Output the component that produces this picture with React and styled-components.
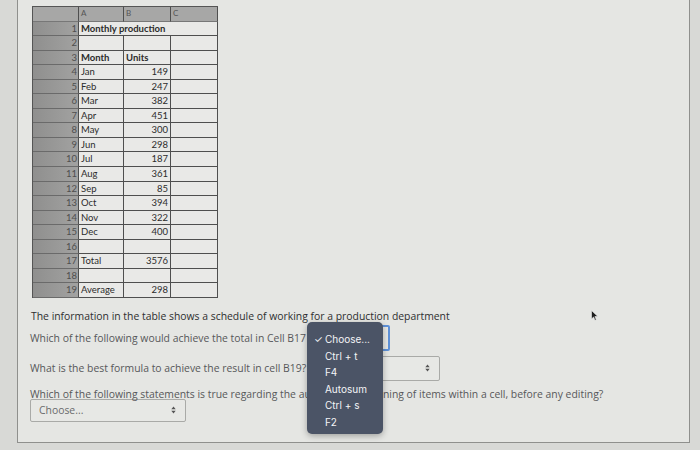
import React from 'react';
import styled, { createGlobalStyle } from 'styled-components';

const GlobalStyle = createGlobalStyle`
  body {
    margin: 0;
    background: #d8d9d6;
    font-family: "Open Sans", "Liberation Sans", sans-serif;
  }
`;

const Panel = styled.div`
  position: relative;
  margin-left: 17px;
  width: 673px;
  height: 443px;
  box-sizing: border-box;
  padding: 6px 0 0 14px;
  background: #e5e6e3;
  border-left: 1px solid #8f908d;
  border-right: 1px solid #8f908d;
  border-bottom: 1px solid #8f908d;
`;

// spreadsheet picture
const Sheet = styled.div`
  display: grid;
  grid-template-columns: 46px 45px 47px 47px;
  grid-auto-rows: 14.55px;
  width: 185px;
  border-top: 1px solid #555;
  border-left: 1px solid #555;
  background: #e9e9e7;
  font-family: Lato, "Open Sans", sans-serif;
  font-size: 9.5px;
  color: #2c2c2c;
`;

const Cell = styled.div`
  box-sizing: border-box;
  border-right: 1px solid #4f4f4f;
  border-bottom: 1px solid #4f4f4f;
  padding: 0 2px;
  line-height: 13px;
  white-space: nowrap;
  overflow: visible;
  text-align: ${p => (p.$num ? 'right' : 'left')};
  font-weight: ${p => (p.$bold ? 700 : 400)};
  grid-column: ${p => (p.$span ? `span ${p.$span}` : 'auto')};
`;

const ColHead = styled(Cell)`
  background: #a7a7a6;
  color: #555;
  font-size: 8px;
  border-bottom-color: #777;
`;

const RowHead = styled(Cell)`
  background: linear-gradient(90deg, #8f8f8e, #a2a2a1);
  color: #4e4e4e;
  text-align: right;
  padding-right: 1px;
  border-bottom-color: #6a6a6a;
`;

const Intro = styled.p`
  margin: 11px 0 0 -1px;
  font-size: 10.4px;
  line-height: 14px;
  color: #2e2f30;
`;

const Question = styled.div`
  display: flex;
  align-items: center;
  gap: 4px;
  margin: ${p => p.$mt} 0 0 -2px;
  font-size: 10.4px;
  color: #57585a;
`;

const QuestionBlock = styled.div`
  margin: 7px 0 0 -2px;
  font-size: 10.4px;
  line-height: 12px;
  color: #57585a;
`;

const SelectWrap = styled.div`
  position: relative;
`;

const Select = styled.div`
  box-sizing: border-box;
  display: flex;
  align-items: center;
  justify-content: space-between;
  width: ${p => p.$w}px;
  height: ${p => p.$h}px;
  margin-top: ${p => p.$mt || 0}px;
  padding: 0 9px 0 8px;
  background: #e7e8e5;
  border: ${p => (p.$focus ? '2px solid #5f92d9' : '1px solid #a9aaa7')};
  border-radius: 2px;
  color: #6a6b6c;
  font-size: 10.4px;
`;

const Popup = styled.ul`
  position: absolute;
  left: -3px;
  top: -3px;
  width: 76px;
  box-sizing: border-box;
  margin: 0;
  padding: 9px 0 3px;
  list-style: none;
  background: #4b5466;
  border-radius: 5px;
  box-shadow: 0 2px 6px rgba(0, 0, 0, 0.3);
  font-family: Inter, "Liberation Sans", sans-serif;
  font-size: 10px;
  color: #f4f5f7;
  z-index: 2;
`;

const Option = styled.li`
  position: relative;
  height: 16.6px;
  line-height: 16.6px;
  padding-left: 18px;
`;

const Check = styled.span`
  position: absolute;
  left: 7px;
  font-size: 10px;
`;

const Cursor = styled.svg`
  position: absolute;
  left: 573px;
  top: 310px;
`;

const Arrows = () => (
  <svg width="5" height="8" viewBox="0 0 5 8">
    <path d="M2.5 0.5 L4.7 3.3 H0.3 Z M2.5 7.5 L4.7 4.7 H0.3 Z" fill="#555" />
  </svg>
);

const rows = [
  ['Monthly production', null, true],
  ['', ''],
  ['Month', 'Units', true],
  ['Jan', '149'],
  ['Feb', '247'],
  ['Mar', '382'],
  ['Apr', '451'],
  ['May', '300'],
  ['Jun', '298'],
  ['Jul', '187'],
  ['Aug', '361'],
  ['Sep', '85'],
  ['Oct', '394'],
  ['Nov', '322'],
  ['Dec', '400'],
  ['', ''],
  ['Total', '3576'],
  ['', ''],
  ['Average', '298'],
];

const options = ['Choose...', 'Ctrl + t', 'F4', 'Autosum', 'Ctrl + s', 'F2'];

export default function App() {
  return (
    <>
      <GlobalStyle />
      <Panel>
        <Sheet>
          <ColHead />
          <ColHead>A</ColHead>
          <ColHead>B</ColHead>
          <ColHead>C</ColHead>
          {rows.map(([a, b, bold], i) => (
            <React.Fragment key={i}>
              <RowHead>{i + 1}</RowHead>
              {b === null ? (
                <Cell $bold $span={3}>{a}</Cell>
              ) : (
                <>
                  <Cell $bold={bold}>{a}</Cell>
                  <Cell $bold={bold} $num={!bold}>{b}</Cell>
                  <Cell />
                </>
              )}
            </React.Fragment>
          ))}
        </Sheet>

        <Intro>The information in the table shows a schedule of working for a production department</Intro>

        <Question $mt="2px">
          Which of the following would achieve the total in Cell B17
          <SelectWrap>
            <Select $w={80} $h={26} $focus />
            <Popup>
              {options.map((o, i) => (
                <Option key={o}>
                  {i === 0 && <Check>✓</Check>}
                  {o}
                </Option>
              ))}
            </Popup>
          </SelectWrap>
        </Question>

        <Question $mt="5px">
          What is the best formula to achieve the result in cell B19?
          <Select $w={130} $h={25}>
            <span />
            <Arrows />
          </Select>
        </Question>

        <QuestionBlock>
          Which of the following statements is true regarding the automatic positioning of items within a cell, before any editing?
          <Select $w={156} $h={23} $mt={-1}>
            Choose...
            <Arrows />
          </Select>
        </QuestionBlock>

        <Cursor width="8" height="11" viewBox="0 0 8 11">
          <path d="M0.5 0.5 L0.5 9 L2.6 7 L4 10.3 L5.3 9.7 L3.9 6.5 L6.8 6.5 Z" fill="#1d1d1d" stroke="#eee" strokeWidth="0.6" />
        </Cursor>
      </Panel>
    </>
  );
}
